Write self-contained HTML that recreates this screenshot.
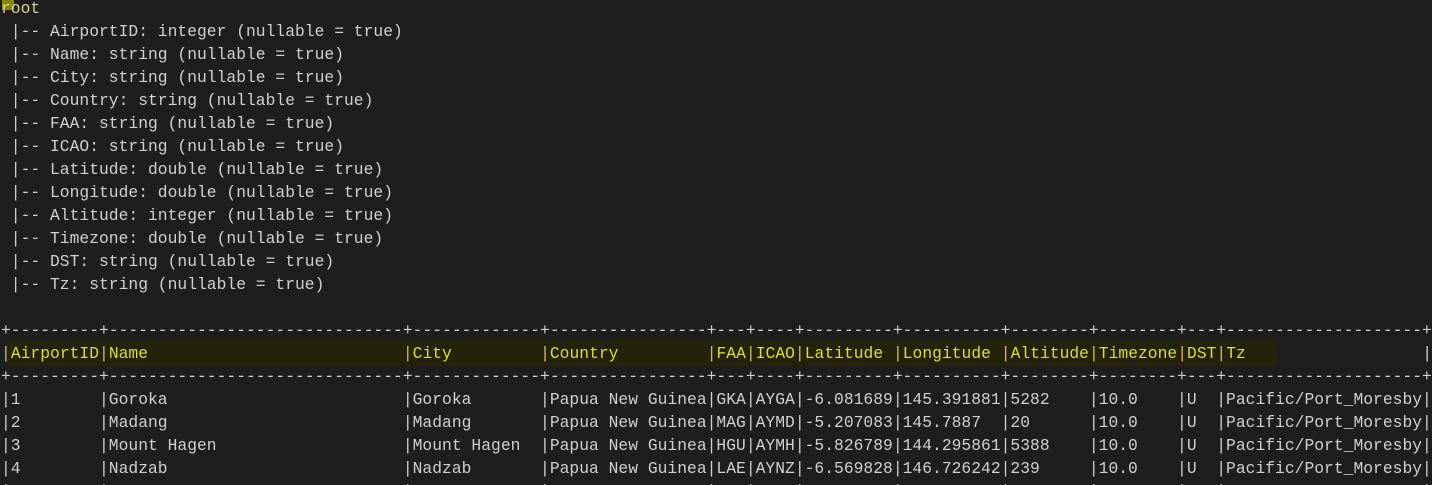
<!DOCTYPE html>
<html><head><meta charset="utf-8"><style>
html,body{margin:0;padding:0;background:#1e1e1e;width:1432px;height:485px;overflow:hidden;position:relative}
pre{position:absolute;left:1px;top:-3px;margin:0;font-family:"Liberation Mono",monospace;font-size:16.3px;letter-spacing:0.03px;line-height:23px;color:#d0d0d0;white-space:pre}
.y{color:#dcdc3c}
.p{color:#d7b46a}
.hl{position:absolute;left:5px;top:340px;width:1272px;height:26px;background:#23230c;border-radius:8px}
.rh{position:absolute;left:2px;top:0px;width:12px;height:10px;background:rgba(201,201,0,0.6)}
</style></head><body>
<div class="hl"></div>
<div class="rh"></div>
<pre><span style="color:#d4d48a">root</span>
 |-- AirportID: integer (nullable = true)
 |-- Name: string (nullable = true)
 |-- City: string (nullable = true)
 |-- Country: string (nullable = true)
 |-- FAA: string (nullable = true)
 |-- ICAO: string (nullable = true)
 |-- Latitude: double (nullable = true)
 |-- Longitude: double (nullable = true)
 |-- Altitude: integer (nullable = true)
 |-- Timezone: double (nullable = true)
 |-- DST: string (nullable = true)
 |-- Tz: string (nullable = true)

+---------+------------------------------+-------------+----------------+---+----+---------+----------+--------+--------+---+--------------------+
<span class="p">|</span><span class="y">AirportID</span><span class="p">|</span><span class="y">Name                          </span><span class="p">|</span><span class="y">City         </span><span class="p">|</span><span class="y">Country         </span><span class="p">|</span><span class="y">FAA</span><span class="p">|</span><span class="y">ICAO</span><span class="p">|</span><span class="y">Latitude </span><span class="p">|</span><span class="y">Longitude </span><span class="p">|</span><span class="y">Altitude</span><span class="p">|</span><span class="y">Timezone</span><span class="p">|</span><span class="y">DST</span><span class="p">|</span><span class="y">Tz                  </span>|
+---------+------------------------------+-------------+----------------+---+----+---------+----------+--------+--------+---+--------------------+
|1        |Goroka                        |Goroka       |Papua New Guinea|GKA|AYGA|-6.081689|145.391881|5282    |10.0    |U  |Pacific/Port_Moresby|
|2        |Madang                        |Madang       |Papua New Guinea|MAG|AYMD|-5.207083|145.7887  |20      |10.0    |U  |Pacific/Port_Moresby|
|3        |Mount Hagen                   |Mount Hagen  |Papua New Guinea|HGU|AYMH|-5.826789|144.295861|5388    |10.0    |U  |Pacific/Port_Moresby|
|4        |Nadzab                        |Nadzab       |Papua New Guinea|LAE|AYNZ|-6.569828|146.726242|239     |10.0    |U  |Pacific/Port_Moresby|
|         |                              |             |                |   |    |         |          |        |        |   |                    |
</pre>
</body></html>
